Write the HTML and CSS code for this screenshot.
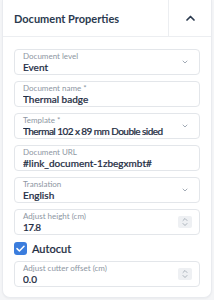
FILE: index.html
```html
<!DOCTYPE html>
<html>
<head>
<meta charset="utf-8">
<link rel="stylesheet" href="styles.css">
</head>
<body>
<div class="card">
  <div class="card-header">
    <div class="title">Document Properties</div>
    <div class="toggle">
      <svg width="9" height="6" viewBox="0 0 9 6"><path d="M1 5 L4.5 1.5 L8 5" fill="none" stroke="#2b3a4f" stroke-width="1.7" stroke-linecap="round" stroke-linejoin="round"/></svg>
    </div>
  </div>
  <div class="card-body">
    <div class="field">
      <div class="field-text"><div class="label">Document level</div><div class="value">Event</div></div>
      <svg class="caret" width="6" height="4" viewBox="0 0 6 4"><path d="M1 1 L3 3 L5 1" fill="none" stroke="#a3abb6" stroke-width="1" stroke-linecap="round"/></svg>
    </div>
    <div class="field">
      <div class="field-text"><div class="label">Document name *</div><div class="value">Thermal badge</div></div>
    </div>
    <div class="field">
      <div class="field-text"><div class="label">Template *</div><div class="value tight">Thermal 102 x 89 mm Double sided</div></div>
      <svg class="caret" width="6" height="4" viewBox="0 0 6 4"><path d="M1 1 L3 3 L5 1" fill="none" stroke="#a3abb6" stroke-width="1" stroke-linecap="round"/></svg>
    </div>
    <div class="field">
      <div class="field-text"><div class="label">Document URL</div><div class="value">#link_document-1zbegxmbt#</div></div>
    </div>
    <div class="field">
      <div class="field-text"><div class="label">Translation</div><div class="value">English</div></div>
      <svg class="caret" width="6" height="4" viewBox="0 0 6 4"><path d="M1 1 L3 3 L5 1" fill="none" stroke="#a3abb6" stroke-width="1" stroke-linecap="round"/></svg>
    </div>
    <div class="field">
      <div class="field-text"><div class="label">Adjust height (cm)</div><div class="value tight">17.8</div></div>
      <div class="spinner">
        <svg width="6" height="10" viewBox="0 0 6 10"><path d="M1 3.5 L3 1.5 L5 3.5 M1 6.5 L3 8.5 L5 6.5" fill="none" stroke="#a3abb6" stroke-width="0.9" stroke-linecap="round"/></svg>
      </div>
    </div>
    <div class="check-row">
      <span class="checkbox">
        <svg width="9" height="7" viewBox="0 0 9 7"><path d="M1 3.6 L3.4 6 L8 1.2" fill="none" stroke="#fff" stroke-width="1.5" stroke-linecap="round" stroke-linejoin="round"/></svg>
      </span>
      <span class="check-label">Autocut</span>
    </div>
    <div class="field">
      <div class="field-text"><div class="label">Adjust cutter offset (cm)</div><div class="value">0.0</div></div>
      <div class="spinner">
        <svg width="6" height="10" viewBox="0 0 6 10"><path d="M1 3.5 L3 1.5 L5 3.5 M1 6.5 L3 8.5 L5 6.5" fill="none" stroke="#a3abb6" stroke-width="0.9" stroke-linecap="round"/></svg>
      </div>
    </div>
  </div>
</div>
</body>
</html>
```

FILE: styles.css
```css
* { box-sizing: border-box; }
html, body { margin: 0; padding: 0; }
body {
  background: #f4f5f7;
  font-family: "Lato", "Inter", sans-serif;
  width: 214px;
  height: 300px;
  overflow: hidden;
}
.card {
  margin: 0 2px;
  background: #fff;
  border: 1px solid #e9ebef;
  border-radius: 0 0 8px 8px;
  border-top: none;
  height: 298px;
  box-shadow: 0 1px 2px rgba(0,0,0,0.04);
}
.card-header {
  display: flex;
  height: 37px;
  border-bottom: 1px solid #eceef1;
}
.title {
  flex: 1;
  display: flex;
  align-items: center;
  padding-left: 11px;
  font-size: 11px;
  font-weight: 700;
  color: #2b3a4f;
}
.toggle {
  width: 43px;
  border-left: 1px solid #eceef1;
  display: flex;
  align-items: center;
  justify-content: center;
}
.card-body {
  padding: 12px 11px 10px;
  display: flex;
  flex-direction: column;
  gap: 6px;
}
.field {
  height: 26px;
  border: 1px solid #e3e6ea;
  border-radius: 4px;
  padding: 0 7px 0 8px;
  display: flex;
  align-items: center;
}
.field-text {
  flex: 1;
  display: flex;
  flex-direction: column;
  min-width: 0;
}
.label {
  font-size: 8px;
  line-height: 9px;
  color: #8d96a2;
}
.value {
  font-size: 10px;
  line-height: 12px;
  font-weight: 500;
  color: #1f2e44;
  white-space: nowrap;
  overflow: hidden;
  -webkit-text-stroke: 0.2px #1f2e44;
}
.value.tight {
  letter-spacing: -0.55px;
}
.caret { margin-right: 4px; flex: none; }
.spinner {
  flex: none;
  width: 14px;
  height: 12px;
  background: #eef0f3;
  border-radius: 2px;
  display: flex;
  align-items: center;
  justify-content: center;
}
.check-row {
  height: 14px;
  display: flex;
  align-items: center;
  gap: 5px;
}
.checkbox {
  width: 13px;
  height: 13px;
  border-radius: 3px;
  background: #3b7ddd;
  display: flex;
  align-items: center;
  justify-content: center;
}
.check-label {
  font-size: 11px;
  font-weight: 500;
  color: #1f2e44;
  -webkit-text-stroke: 0.2px #1f2e44;
}
```
